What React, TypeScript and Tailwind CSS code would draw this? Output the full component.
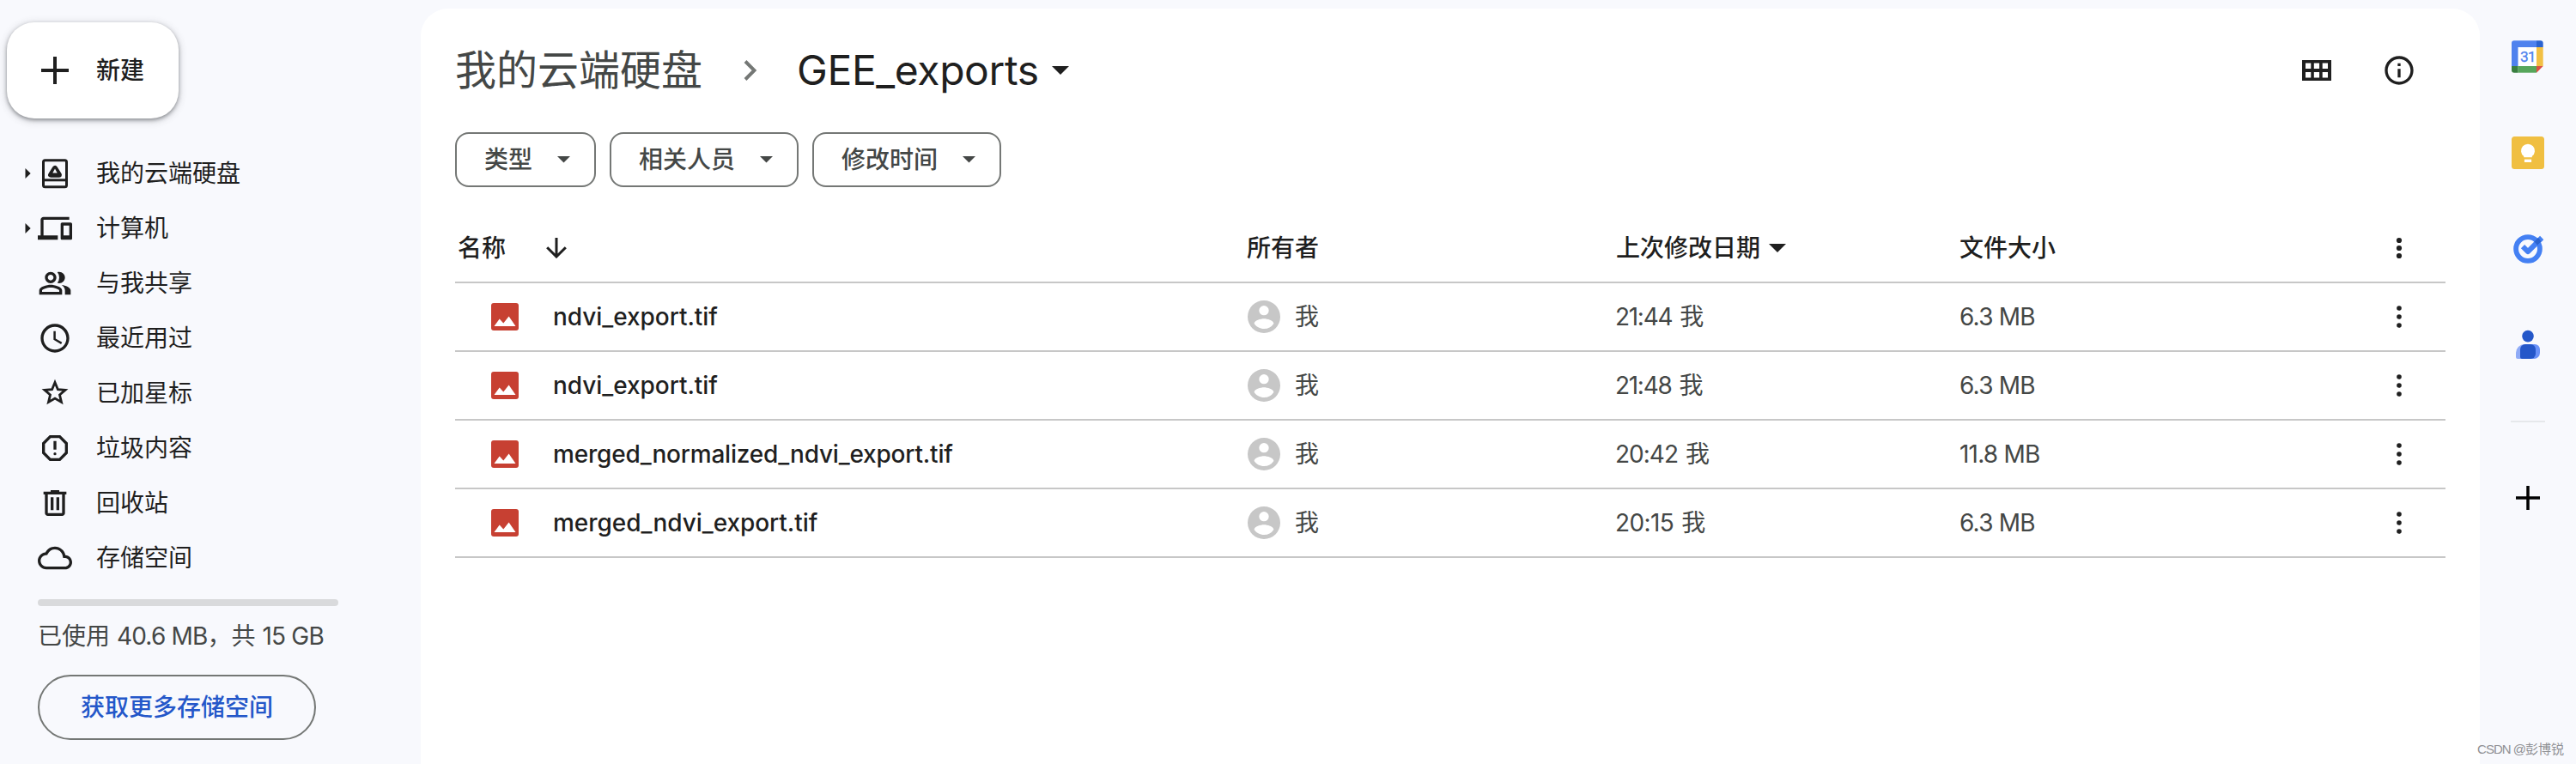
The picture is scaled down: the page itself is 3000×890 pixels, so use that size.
import type { ReactNode } from "react";

function Glyph({ d }: { d: string }) {
  return (
    <svg viewBox="0 0 24 24" className="size-10 shrink-0" fill="currentColor">
      <path d={d} fillRule="evenodd" />
    </svg>
  );
}

function DriveIcon() {
  return (
    <svg viewBox="0 0 40 40" className="size-10 shrink-0" fill="none" stroke="currentColor">
      <rect x="6.5" y="4.8" width="27" height="30.9" rx="2" strokeWidth="3" />
      <path d="M6.5 27.8h27" strokeWidth="3" />
      <path d="M20 14.2l-4.700 7.400h9.400z" strokeWidth="6.400" strokeLinejoin="round" />
      <path d="M20 14.500l-2.700 5h5.400z" fill="#f8f9fd" stroke="none" />
    </svg>
  );
}

function StarIcon() {
  return (
    <svg viewBox="0 0 40 40" className="size-10 shrink-0" fill="none" stroke="currentColor" strokeWidth="2.8">
      <path d="M20 7.500l3.400 8.200 8.600.700-6.500 5.600 2 8.400L20 26l-7.500 4.400 2-8.400L8 16.400l8.600-.7z" />
    </svg>
  );
}

const paths = {
  devices:
    "M4 6h18V4H4c-1.1 0-2 .9-2 2v11H0v3h14v-3H4V6zm19 2h-6c-.55 0-1 .45-1 1v10c0 .55.45 1 1 1h6c.55 0 1-.45 1-1V9c0-.55-.45-1-1-1zm-1 9h-4v-7h4v7z",
  people:
    "M16.67 13.13C18.04 14.06 19 15.32 19 17v3h4v-3c0-2.18-3.57-3.47-6.33-3.87zM15 12c2.21 0 4-1.79 4-4s-1.79-4-4-4c-.47 0-.91.1-1.33.24a5.98 5.98 0 0 1 0 7.52c.42.14.86.24 1.33.24zM9 12c2.21 0 4-1.79 4-4s-1.79-4-4-4-4 1.79-4 4 1.79 4 4 4zm0-6c1.1 0 2 .9 2 2s-.9 2-2 2-2-.9-2-2 .9-2 2-2zM9 13c-2.67 0-8 1.34-8 4v3h16v-3c0-2.66-5.33-4-8-4zm6 5H3v-.99C3.2 16.29 6.3 15 9 15s5.8 1.29 6 2v1z",
  clock:
    "M11.99 2C6.47 2 2 6.48 2 12s4.47 10 9.99 10C17.52 22 22 17.52 22 12S17.52 2 11.99 2zM12 20c-4.42 0-8-3.58-8-8s3.58-8 8-8 8 3.58 8 8-3.58 8-8 8zM12.5 7H11v6l5.25 3.15.75-1.23-4.5-2.67z",
  spam:
    "M15.73 3H8.27L3 8.27v7.46L8.27 21h7.46L21 15.73V8.27L15.73 3zM19 14.9L14.9 19H9.1L5 14.9V9.1L9.1 5h5.8L19 9.1v5.8zM11 7h2v6h-2zM12 15a1 1 0 1 0 0 2 1 1 0 0 0 0-2z",
  trash:
    "M7 21q-.825 0-1.412-.587T5 19V6H4V4h5V3h6v1h5v2h-1v13q0 .825-.587 1.413T17 21zM17 6H7v13h10zM9 17h2V8H9zm4 0h2V8h-2z",
  cloud:
    "M19.35 10.04C18.67 6.59 15.64 4 12 4 9.11 4 6.6 5.64 5.35 8.04 2.34 8.36 0 10.91 0 14c0 3.31 2.69 6 6 6h13c2.76 0 5-2.24 5-5 0-2.64-2.05-4.78-4.65-4.96zM19 18H6c-2.21 0-4-1.79-4-4 0-2.05 1.53-3.76 3.56-3.97l1.07-.11.5-.95C8.08 7.14 9.94 6 12 6c2.62 0 4.88 1.86 5.39 4.43l.3 1.5 1.53.11c1.56.1 2.78 1.41 2.78 2.96 0 1.65-1.35 3-3 3z",
  info:
    "M11 7h2v2h-2zM11 11h2v6h-2zM12 2C6.48 2 2 6.48 2 12s4.48 10 10 10 10-4.48 10-10S17.52 2 12 2zm0 18c-4.41 0-8-3.59-8-8s3.59-8 8-8 8 3.59 8 8-3.59 8-8 8z",
  person:
    "M12 .6a11.4 11.4 0 1 0 0 22.8A11.4 11.4 0 0 0 12 .6zM12 4.2a3.4 3.4 0 1 1 0 6.8 3.4 3.4 0 0 1 0-6.8zM12 20.4c-2.85 0-5.4-1.4-6.84-3.6.04-2.27 4.56-3.5 6.84-3.5s6.8 1.23 6.84 3.5A8.2 8.2 0 0 1 12 20.4z",
};

const nav: { label: string; icon: ReactNode; expandable?: boolean }[] = [
  { label: "我的云端硬盘", icon: <DriveIcon />, expandable: true },
  { label: "计算机", icon: <Glyph d={paths.devices} />, expandable: true },
  { label: "与我共享", icon: <Glyph d={paths.people} /> },
  { label: "最近用过", icon: <Glyph d={paths.clock} /> },
  { label: "已加星标", icon: <StarIcon /> },
  { label: "垃圾内容", icon: <Glyph d={paths.spam} /> },
  { label: "回收站", icon: <Glyph d={paths.trash} /> },
  { label: "存储空间", icon: <Glyph d={paths.cloud} /> },
];

function Sidebar() {
  return (
    <aside className="w-[490px] shrink-0 pt-[26px]">
      <button className="ml-2 flex h-28 w-[200px] items-center rounded-[32px] bg-white pl-10 shadow-[0_2px_4px_rgba(60,64,67,0.5),0_2px_8px_2px_rgba(60,64,67,0.16)]">
        <svg viewBox="0 0 32 32" className="size-8" stroke="currentColor" strokeWidth="4">
          <path d="M16 0v32M0 16h32" />
        </svg>
        <span className="ml-8 text-[28px] font-medium">新建</span>
      </button>
      <nav className="mt-8">
        {nav.map((item) => (
          <div key={item.label} className="flex h-16 items-center">
            <div className="flex w-11 shrink-0 justify-end pr-2">
              {item.expandable && (
                <svg viewBox="0 0 7 12" className="h-3 w-[7px]" fill="currentColor">
                  <path d="M.5 0l6.2 6-6.2 6z" />
                </svg>
              )}
            </div>
            {item.icon}
            <span className="ml-7 text-[28px]">{item.label}</span>
          </div>
        ))}
      </nav>
      <div className="ml-11 mt-4 h-2 w-[350px] rounded-full bg-[#d9dadc]" />
      <div className="ml-11 mt-[15px] text-[28px] leading-10 whitespace-pre text-[#444746]">
        已使用 <span className="tracking-[-0.8px]">40.6 MB</span>，共 <span className="tracking-[-0.8px]">15 GB</span>
      </div>
      <button className="ml-11 mt-[25px] h-[76px] w-[324px] rounded-full border-2 border-[#747775] text-[28px] font-medium text-[#2457c9]">
        获取更多存储空间
      </button>
    </aside>
  );
}

function Caret({ size }: { size: string }) {
  return (
    <svg viewBox="0 0 20 10" className={size} fill="currentColor">
      <path d="M0 0h20L10 10z" />
    </svg>
  );
}

function Dots({ gap, r }: { gap: number; r: number }) {
  return (
    <svg viewBox="0 0 8 32" className="h-8 w-2" fill="currentColor">
      <circle cx="4" cy={16 - gap} r={r} />
      <circle cx="4" cy="16" r={r} />
      <circle cx="4" cy={16 + gap} r={r} />
    </svg>
  );
}

function Chip({ label, width }: { label: string; width: string }) {
  return (
    <button className={`${width} flex h-16 items-center justify-between rounded-2xl border-2 border-[#747775] pl-8 pr-[28px] text-[28px] font-medium text-[#444746]`}>
      {label}
      <Caret size="w-[15px] h-[7.5px]" />
    </button>
  );
}

const files = [
  { name: "ndvi_export.tif", nameClass: "tracking-[-0.05px]", time: "21:44", timeClass: "tracking-[-1.3px]", size: "6.3 MB" },
  { name: "ndvi_export.tif", nameClass: "tracking-[-0.05px]", time: "21:48", timeClass: "tracking-[-1.3px]", size: "6.3 MB" },
  { name: "merged_normalized_ndvi_export.tif", nameClass: "tracking-[-0.2px]", time: "20:42", timeClass: "tracking-[-1px]", size: "11.8 MB" },
  { name: "merged_ndvi_export.tif", nameClass: "tracking-[-0.05px]", time: "20:15", timeClass: "tracking-[-0.6px]", size: "6.3 MB" },
];

const columns = "grid grid-cols-[922px_430px_400px_508px_8px] items-center border-b-2 border-[#c7c7c7]";

function Main() {
  return (
    <main className="mt-[10px] w-[2398px] shrink-0 rounded-t-[32px] bg-white px-10">
      <div className="flex h-36 items-center">
        <span className="text-[48px] text-[#444746]">我的云端硬盘</span>
        <svg viewBox="0 0 16 24" className="ml-[48px] h-6 w-4" fill="none" stroke="#747775" strokeWidth="3.9">
          <path d="M2 1.500L12.500 12 2 22.500" />
        </svg>
        <span className="ml-[46px] w-[281px] text-[48px] tracking-[-0.4px] whitespace-nowrap">GEE_exports</span>
        <span className="ml-[16px]">
          <Caret size="w-5 h-[10px]" />
        </span>
        <svg viewBox="0 0 34 24" className="ml-auto mr-[59px] h-6 w-[34px]" fill="currentColor">
          <path
            fillRule="evenodd"
            d="M0 0h34v24H0zM4 3.500v6.500h6.300V3.500zm9.800 0v6.500h6.300V3.500zm9.900 0v6.500H30V3.500zM4 14v6.500h6.300V14zm9.800 0v6.500h6.300V14zm9.900 0v6.500H30V14z"
          />
        </svg>
        <span className="mr-[34px]">
          <Glyph d={paths.info} />
        </span>
      </div>
      <div className="flex gap-4">
        <Chip label="类型" width="w-[164px]" />
        <Chip label="相关人员" width="w-[220px]" />
        <Chip label="修改时间" width="w-[220px]" />
      </div>
      <div className={`${columns} mt-8 h-20 text-[28px] font-medium`}>
        <div className="flex items-center pl-[3px]">
          名称
          <svg viewBox="0 0 24 24" className="ml-[47px] size-6" fill="none" stroke="currentColor" strokeWidth="3">
            <path d="M12 0v22M1.200 11.200L12 22l10.800-10.800" />
          </svg>
        </div>
        <div>所有者</div>
        <div className="flex items-center gap-[10px]">
          上次修改日期
          <Caret size="w-5 h-[10px]" />
        </div>
        <div>文件大小</div>
        <Dots gap={9} r={3.1} />
      </div>
      {files.map((f, i) => (
        <div key={i} className={`${columns} h-20 text-[28px] text-[#444746]`}>
          <div className="flex items-center pl-[42px]">
            <svg viewBox="0 0 32 32" className="size-8">
              <rect width="32" height="32" rx="3" fill="#c74032" />
              <path d="M3.500 27l6.200-8.400 4.600 5 6.300-8.100L28.500 27z" fill="#fff" />
            </svg>
            <span className={`${f.nameClass} ml-[40px] font-medium text-[#1f1f1f]`}>{f.name}</span>
          </div>
          <div className="flex items-center gap-4">
            <span className="text-[#c7c7c7]">
              <Glyph d={paths.person} />
            </span>
            我
          </div>
          <div className="flex gap-[9px] pl-px -ml-[2px]">
            <span className={f.timeClass}>{f.time}</span>
            <span>我</span>
          </div>
          <div className="tracking-[-0.8px]">{f.size}</div>
          <span className="text-[#1f1f1f]">
            <Dots gap={10} r={2.8} />
          </span>
        </div>
      ))}
    </main>
  );
}

function Rail() {
  return (
    <aside className="flex flex-1 flex-col items-center pt-[46px]">
      <svg viewBox="0 0 40 40" className="size-10">
        <path d="M4 1.300h26V9H9v22H1V4.300a3 3 0 0 1 3-3z" fill="#4f82ee" />
        <path d="M30 1.300h4.700a3 3 0 0 1 3 3V9H30z" fill="#2b63cf" />
        <path d="M30 9h7.700v22H30z" fill="#f2c044" />
        <path d="M8.500 31H30v7.700H8.500z" fill="#57a65b" />
        <path d="M1 31h7.500v7.700H4a3 3 0 0 1-3-3z" fill="#397e40" />
        <path d="M30 31h7.700L30 38.700z" fill="#dc5043" />
        <path d="M8.500 9H30v22H8.500z" fill="#fff" />
        <text x="19.700" y="26.200" textAnchor="middle" fontSize="17.300" fill="#4f82ee" stroke="#4f82ee" strokeWidth=".3" letterSpacing="-1" className="font-['Roboto',sans-serif]">
          31
        </text>
      </svg>
      <svg viewBox="0 0 40 40" className="mt-[72px] size-10">
        <rect x="1" y="1" width="38" height="38" rx="3.500" fill="#f0bf41" />
        <path d="M15.200 25.200v-1.100a8 8 0 1 1 9.600 0v1.100z" fill="#fff" />
        <path d="M15.900 27.600h8.200V31h-8.200z" fill="#fff" />
      </svg>
      <svg viewBox="0 0 40 40" className="mt-[72px] size-10">
        <circle cx="20" cy="20" r="13.900" fill="none" stroke="#4480f3" strokeWidth="5.800" />
        <path d="M14 17.200l6 5.900L36.200 7" fill="none" stroke="#4480f3" strokeWidth="6" strokeLinejoin="round" />
        <path d="M27.300 11.700l4.600-4.600c1.300 1.200 2.500 2.700 3.300 4.300l-4.400 4.300c-.8-1.600-2-3-3.500-4z" fill="#2b63cf" />
      </svg>
      <svg viewBox="0 0 40 40" className="mt-[72px] size-10">
        <circle cx="20" cy="9.600" r="6.800" fill="#2457c9" />
        <path d="M16 19h6v17H8a2 2 0 0 1-2-2v-5a10 10 0 0 1 10-10z" fill="#8fabf7" />
        <path d="M20 19h8a6 6 0 0 1 6 6v4a7 7 0 0 1-7 7h-7z" fill="#6a92f8" />
        <path d="M17 19h6a6 6 0 0 1 6 6v5a6 6 0 0 1-6 6H13a2 2 0 0 1-2-2v-9a6 6 0 0 1 6-6z" fill="#2457c9" />
      </svg>
      <div className="mt-[68px] h-0.5 w-10 bg-[#e6e8eb]" />
      <svg viewBox="0 0 28 28" className="mt-[74px] size-7" stroke="#000" strokeWidth="3.500">
        <path d="M14 0v28M0 14h28" />
      </svg>
    </aside>
  );
}

export default function App() {
  return (
    <div className="relative flex h-[890px] w-full overflow-hidden bg-[#f8f9fd] font-['Inter','Noto_Sans_CJK_SC',sans-serif] text-[#1f1f1f]">
      <Sidebar />
      <Main />
      <Rail />
      <div className="absolute right-[14px] bottom-[5px] font-['Liberation_Sans','Noto_Sans_CJK_SC',sans-serif] text-[15px] leading-6 text-[#8f9094]">
        <span className="tracking-[-1px]">CSDN @</span>彭博锐
      </div>
    </div>
  );
}
